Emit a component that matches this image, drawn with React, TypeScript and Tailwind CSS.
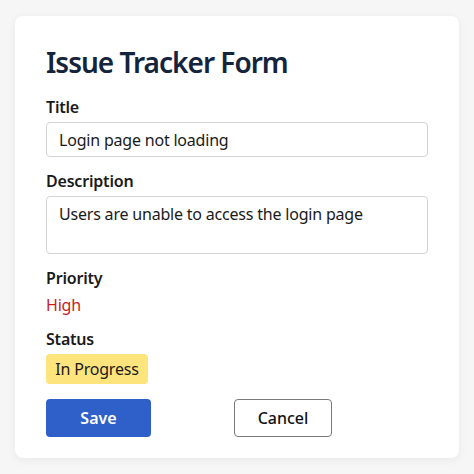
export default function App() {
  return (
    <div className="w-[474px] h-[474px] bg-[#f6f6f6] pt-[16px] pl-[15px]" style={{ fontFamily: '"Noto Sans", "Open Sans", sans-serif' }}>
      <div className="w-[444px] h-[442px] bg-white rounded-[8px] shadow-[0_2px_10px_rgba(0,0,0,0.06)] px-[31px] pt-[28px] flex flex-col">
        <h1 className="text-[28px] leading-[36px] font-semibold text-[#14243c] tracking-[-1px]">Issue Tracker Form</h1>
        <label className="mt-[16px] text-[16px] leading-[22px] font-semibold text-[#1a1a1a] tracking-[-0.2px]">Title</label>
        <div className="mt-[4px] h-[35px] border border-[#d4d4d4] rounded-[4px] px-[12px] flex items-center text-[16px] tracking-[-0.2px] text-[#1a1a1a]">Login page not loading</div>
        <label className="mt-[13px] text-[16px] leading-[22px] font-semibold text-[#1a1a1a] tracking-[-0.2px]">Description</label>
        <div className="mt-[4px] h-[58px] border border-[#d4d4d4] rounded-[4px] px-[12px] pt-[5px] text-[16px] leading-[24px] tracking-[-0.2px] text-[#1a1a1a]">Users are unable to access the login page</div>
        <label className="mt-[13px] text-[16px] leading-[22px] font-semibold text-[#1a1a1a] tracking-[-0.2px]">Priority</label>
        <div className="mt-[5px] text-[16px] leading-[22px] text-[#c41e1e] tracking-[-0.2px]">High</div>
        <label className="mt-[12px] text-[16px] leading-[22px] font-semibold text-[#1a1a1a] tracking-[-0.2px]">Status</label>
        <div className="mt-[4px] self-start h-[30px] w-[102px] rounded-[4px] bg-[#fde47c] flex items-center justify-center text-[16px] tracking-[-0.2px] text-[#1a1a1a]">In Progress</div>
        <div className="mt-[15px] flex">
          <button className="w-[105px] h-[38px] rounded-[4px] bg-[#2f5fc9] text-white text-[16px] font-semibold">Save</button>
          <button className="ml-[83px] w-[98px] h-[38px] rounded-[4px] bg-white border border-[#7a7a7a] text-[#111] text-[16px] font-medium">Cancel</button>
        </div>
      </div>
    </div>
  );
}
